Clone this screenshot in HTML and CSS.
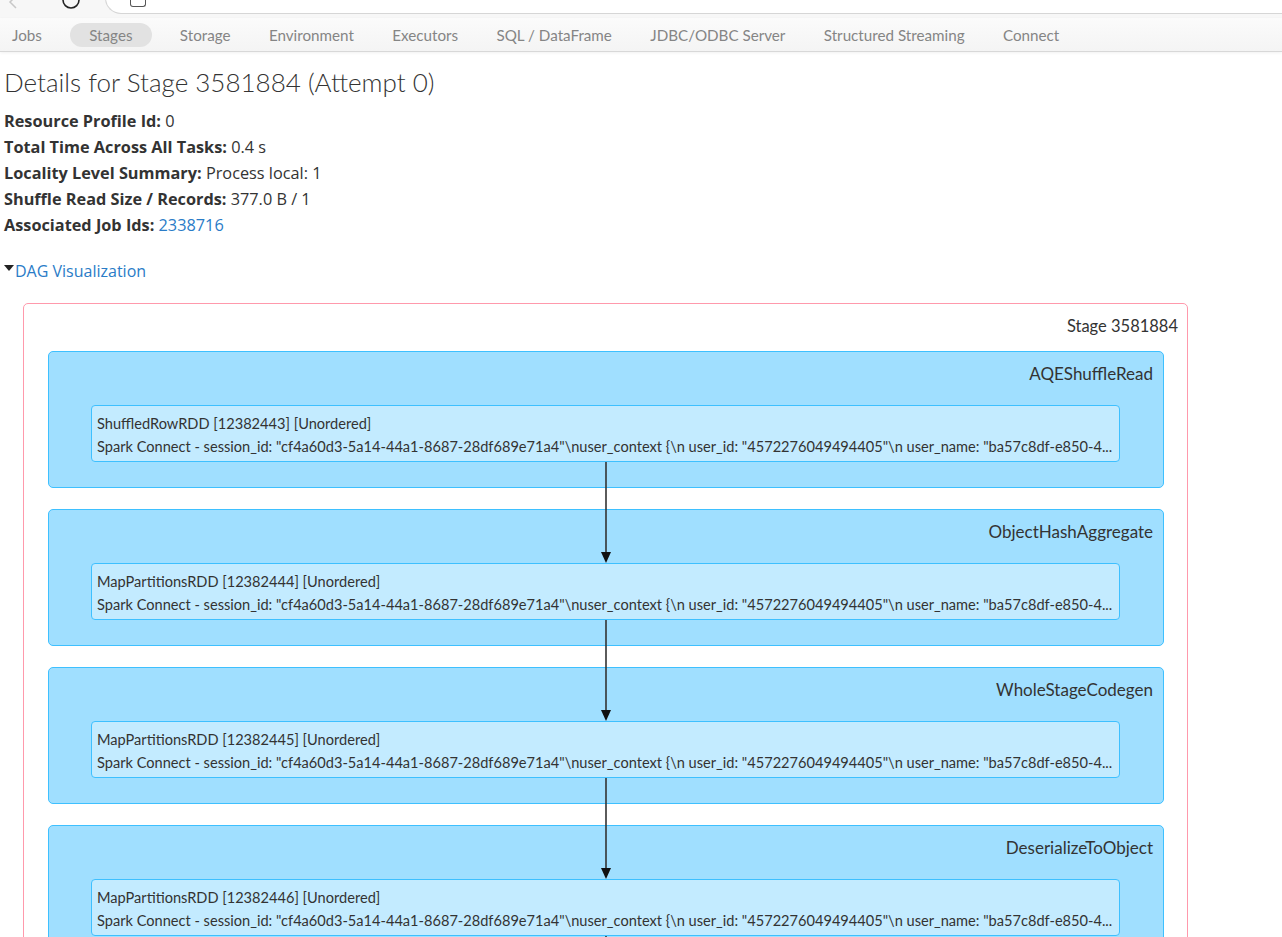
FILE: index.html
```html
<!DOCTYPE html>
<html lang="en">
  <head>
    <meta charset="UTF-8" />
    <meta name="viewport" content="width=device-width, initial-scale=1.0" />
    <title>Details for Stage 3581884</title>
    <link rel="stylesheet" href="styles.css">
  </head>
  <body>
    <!-- browser chrome, cut off at the top -->
    <div class="chrome">
      <svg class="chrome-back" width="16" height="10" viewBox="0 0 16 10">
        <path d="M8 -4 L2 2 L8 8" fill="none" stroke="#c8c8c8" stroke-width="1.5" />
      </svg>
      <svg class="chrome-reload" width="22" height="14" viewBox="0 0 22 14">
        <path d="M3 0 A8 8 0 0 0 19 0" fill="none" stroke="#222" stroke-width="1.6" />
      </svg>
      <div class="address">
        <span class="site-icon"></span>
      </div>
    </div>

    <!-- Spark UI tabs -->
    <nav class="tabs">
      <a href="#">Jobs</a>
      <a href="#" class="active">Stages</a>
      <a href="#">Storage</a>
      <a href="#">Environment</a>
      <a href="#">Executors</a>
      <a href="#">SQL / DataFrame</a>
      <a href="#">JDBC/ODBC Server</a>
      <a href="#">Structured Streaming</a>
      <a href="#">Connect</a>
    </nav>

    <div class="content">
      <h3>Details for Stage 3581884 (Attempt 0)</h3>

      <ul class="summary">
        <li><strong>Resource Profile Id:</strong> 0</li>
        <li><strong>Total Time Across All Tasks:</strong> 0.4 s</li>
        <li><strong>Locality Level Summary:</strong> Process local: 1</li>
        <li><strong>Shuffle Read Size / Records:</strong> 377.0 B / 1</li>
        <li><strong>Associated Job Ids:</strong> <a href="#">2338716</a></li>
      </ul>

      <div class="dag-toggle">
        <span class="arrow-open"></span><a href="#">DAG Visualization</a>
      </div>

      <!-- stage graph -->
      <div class="stage">
        <div class="stage-label">Stage 3581884</div>

        <div class="cluster">
          <div class="cluster-label">AQEShuffleRead</div>
          <div class="node">
            <div class="node-line">ShuffledRowRDD [12382443] [Unordered]</div>
            <div class="node-line">Spark Connect - session_id: "cf4a60d3-5a14-44a1-8687-28df689e71a4"\nuser_context {\n user_id: "4572276049494405"\n user_name: "ba57c8df-e850-4...</div>
            <svg class="edge" width="12" height="101" viewBox="0 0 12 101">
              <line x1="6" y1="0" x2="6" y2="92" />
              <polygon points="1,90 11,90 6,101" />
            </svg>
          </div>
        </div>

        <div class="cluster">
          <div class="cluster-label">ObjectHashAggregate</div>
          <div class="node">
            <div class="node-line">MapPartitionsRDD [12382444] [Unordered]</div>
            <div class="node-line">Spark Connect - session_id: "cf4a60d3-5a14-44a1-8687-28df689e71a4"\nuser_context {\n user_id: "4572276049494405"\n user_name: "ba57c8df-e850-4...</div>
            <svg class="edge" width="12" height="101" viewBox="0 0 12 101">
              <line x1="6" y1="0" x2="6" y2="92" />
              <polygon points="1,90 11,90 6,101" />
            </svg>
          </div>
        </div>

        <div class="cluster">
          <div class="cluster-label">WholeStageCodegen</div>
          <div class="node">
            <div class="node-line">MapPartitionsRDD [12382445] [Unordered]</div>
            <div class="node-line">Spark Connect - session_id: "cf4a60d3-5a14-44a1-8687-28df689e71a4"\nuser_context {\n user_id: "4572276049494405"\n user_name: "ba57c8df-e850-4...</div>
            <svg class="edge" width="12" height="101" viewBox="0 0 12 101">
              <line x1="6" y1="0" x2="6" y2="92" />
              <polygon points="1,90 11,90 6,101" />
            </svg>
          </div>
        </div>

        <div class="cluster">
          <div class="cluster-label">DeserializeToObject</div>
          <div class="node">
            <div class="node-line">MapPartitionsRDD [12382446] [Unordered]</div>
            <div class="node-line">Spark Connect - session_id: "cf4a60d3-5a14-44a1-8687-28df689e71a4"\nuser_context {\n user_id: "4572276049494405"\n user_name: "ba57c8df-e850-4...</div>
            <svg class="edge" width="12" height="101" viewBox="0 0 12 101">
              <line x1="6" y1="0" x2="6" y2="92" />
              <polygon points="1,90 11,90 6,101" />
            </svg>
          </div>
        </div>

        <div class="cluster">
          <div class="cluster-label">MapPartitions</div>
          <div class="node">
            <div class="node-line">MapPartitionsRDD [12382447] [Unordered]</div>
            <div class="node-line">Spark Connect - session_id: "cf4a60d3-5a14-44a1-8687-28df689e71a4"\nuser_context {\n user_id: "4572276049494405"\n user_name: "ba57c8df-e850-4...</div>
          </div>
        </div>
      </div>
    </div>
  </body>
</html>
```

FILE: styles.css
```css
body {
  margin: 0;
  font-family: Lato, "Open Sans", sans-serif;
  color: #333;
  background: #fff;
}

a {
  color: #2a7cc7;
  text-decoration: none;
}

/* browser chrome strip */
.chrome {
  height: 18px;
  background: #f7f7f7;
  display: flex;
  align-items: flex-start;
  overflow: hidden;
}

.chrome-back {
  margin-left: 8px;
}

.chrome-reload {
  margin-left: 36px;
}

.address {
  flex: 1;
  margin-left: 23px;
  margin-top: -20px;
  height: 32px;
  background: #fff;
  border: 1px solid #d6d6d6;
  border-right: none;
  border-radius: 16px 0 0 16px;
  display: flex;
  align-items: flex-end;
}

.site-icon {
  width: 14px;
  height: 10px;
  margin: 0 0 6px 24px;
  border: 1.5px solid #555;
  border-top: none;
  border-radius: 0 0 3px 3px;
}

/* tabs */
.tabs {
  height: 33px;
  display: flex;
  align-items: center;
  background: linear-gradient(#fbfbfb, #f4f4f4);
  border-bottom: 1px solid #d8d8d8;
  box-shadow: 0 1px 3px rgba(0, 0, 0, 0.06);
  font-size: 15.2px;
}

.tabs a {
  color: #858585;
  padding: 0 19.2px;
  line-height: 24px;
}

.tabs a:first-child {
  padding-left: 12px;
}

.tabs a.active {
  margin: 0 9px;
  background: #e2e2e2;
  border-radius: 12px;
}

/* page body */
.content {
  padding: 0 4px;
}

h3 {
  margin: 12px 0 0;
  font-size: 26px;
  line-height: 36px;
  font-weight: 300;
}

.summary {
  list-style: none;
  margin: 8px 0 0;
  padding: 0;
  font-family: "Open Sans", sans-serif;
  font-size: 16.3px;
  line-height: 26px;
}

.dag-toggle {
  margin-top: 20px;
  font-family: "Open Sans", sans-serif;
  font-size: 16px;
  line-height: 26px;
  display: flex;
  align-items: center;
}

.arrow-open {
  width: 0;
  height: 0;
  border-left: 5px solid transparent;
  border-right: 5px solid transparent;
  border-top: 6px solid #222;
  margin: 0 1px 7px 0;
}

/* DAG */
.stage {
  box-sizing: border-box;
  margin: 19px 0 0 19px;
  width: 1165px;
  border: 1px solid #ff99ac;
  border-radius: 5px;
  padding: 10px 23px 0 24px;
  display: flex;
  flex-direction: column;
  gap: 21px;
}

.stage-label {
  text-align: right;
  margin-right: -14px;
  margin-bottom: -8px;
  font-size: 16.5px;
  line-height: 24px;
}

.cluster {
  background: #a0dfff;
  border: 1px solid #3ec0ff;
  border-radius: 5px;
  padding: 10px 0 25px;
}

.cluster-label {
  text-align: right;
  padding-right: 10px;
  font-size: 17px;
  line-height: 24px;
}

.node {
  position: relative;
  margin: 19px 43px 0 42px;
  background: #c3ebff;
  border: 1px solid #3ec0ff;
  border-radius: 4px;
  padding: 6px 6px 3px 5px;
  font-size: 14.6px;
  line-height: 23px;
}

.node-line {
  white-space: nowrap;
  overflow: hidden;
  text-overflow: ellipsis;
}

.edge {
  position: absolute;
  top: 100%;
  left: 50%;
  margin: 1px 0 0 -6px;
}

.edge line {
  stroke: #333;
  stroke-width: 1.6;
}

.edge polygon {
  fill: #111;
}
```
